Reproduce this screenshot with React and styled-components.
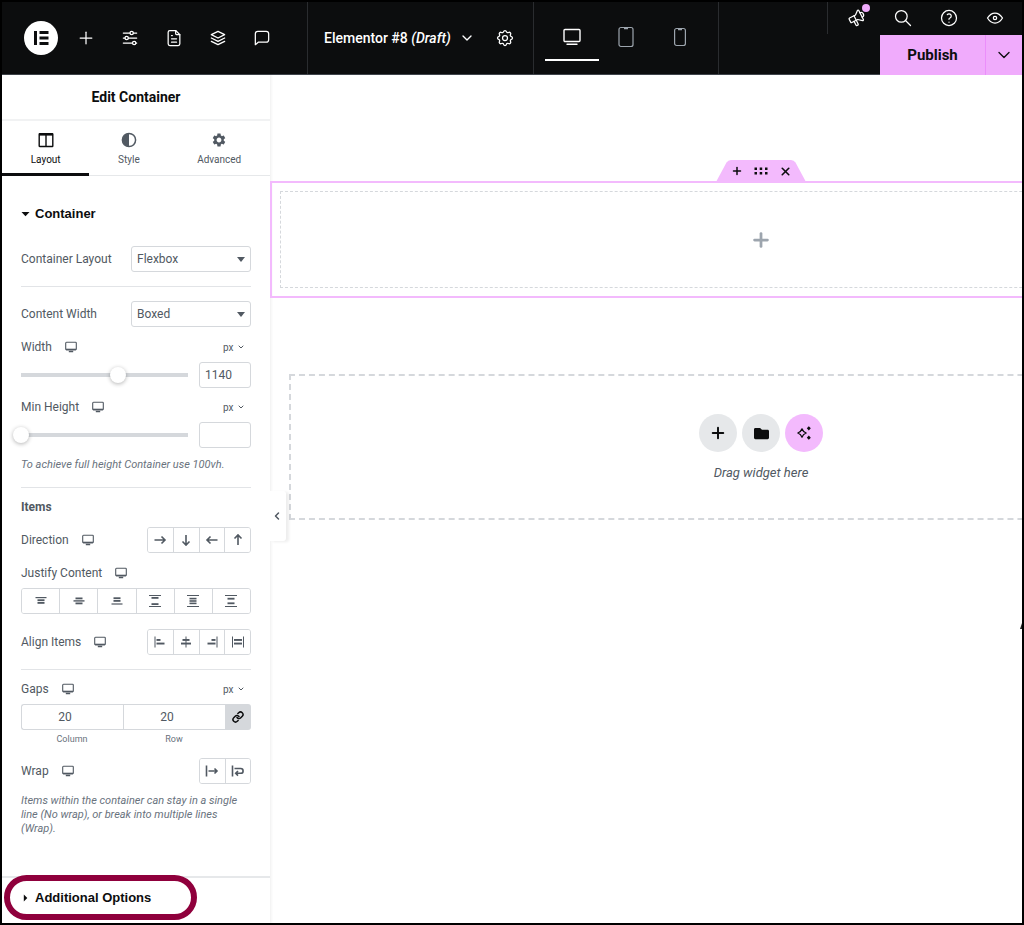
import React, { useState } from "react";
import styled, { createGlobalStyle } from "styled-components";
import { ChevronDown, ChevronLeft, Link, Plus, X } from "lucide-react";
import {
    TbAdjustmentsHorizontal,
    TbEye,
    TbFileText,
    TbHelp,
    TbPlus,
    TbSearch,
    TbSettings,
    TbStack2,
} from "react-icons/tb";
import { MdSettings } from "react-icons/md";
import { FaFolder } from "react-icons/fa";

const GlobalStyle = createGlobalStyle`
    * { box-sizing: border-box; }
    body { margin: 0; background: #000; font-family: Roboto, "Liberation Sans", sans-serif; color: #515962; }
    button, input, select { font-family: inherit; color: inherit; margin: 0; }
    button { cursor: pointer; }
`;

/* ---------- icons ---------- */

const Stroked = ({ size = 20, width = 1.5, children }) => (
    <svg width={size} height={size} viewBox="0 0 24 24" fill="none" stroke="currentColor"
        strokeWidth={width} strokeLinecap="round" strokeLinejoin="round">
        {children}
    </svg>
);

const LogoIcon = () => (
    <svg width="34" height="34" viewBox="0 0 34 34">
        <circle cx="17" cy="17" r="17" fill="#fff" />
        <path d="M10 10h3v14h-3zM15.500 10H24.500v3H15.500zM15.500 15.500H24.500v3H15.500zM15.500 21H24.500v3H15.500z" fill="#0c0d0e" />
    </svg>
);

const ChatIcon = () => (
    <Stroked><path d="M4 20V7a3 3 0 0 1 3-3h10a3 3 0 0 1 3 3v7a3 3 0 0 1-3 3H7.500L4 20" /></Stroked>
);

const MegaphoneIcon = () => (
    <Stroked>
        <g transform="rotate(-27 12 12)">
            <path d="M18 8a3 3 0 0 1 0 6" />
            <path d="M10 8v11a1 1 0 0 1-1 1H8a1 1 0 0 1-1-1v-5" />
            <path d="M12 8l4.524-3.770a.9.9 0 0 1 1.476.692v12.156a.9.9 0 0 1-1.476.692L12 14H4a1 1 0 0 1-1-1V9a1 1 0 0 1 1-1h8" />
        </g>
    </Stroked>
);

const DesktopIcon = () => (
    <svg width="20" height="20" viewBox="0 0 20 20" fill="none" stroke="currentColor" strokeWidth="1.4" strokeLinecap="round">
        <rect x="2" y="2.500" width="16" height="12" rx="1" />
        <path d="M5 17.300h10" />
    </svg>
);

const TabletIcon = () => (
    <svg width="20" height="22" viewBox="0 0 20 22" fill="none" stroke="currentColor" strokeWidth="1.200">
        <rect x="3" y="1.500" width="14" height="19" rx="2" />
        <path d="M8 2.500h4" strokeWidth="1.500" />
    </svg>
);

const MobileIcon = () => (
    <svg width="20" height="20" viewBox="0 0 20 20" fill="none" stroke="currentColor" strokeWidth="1.200">
        <rect x="4.600" y="1.500" width="10.800" height="17" rx="2" />
        <path d="M8 2.500h4" strokeWidth="1.500" />
    </svg>
);

const ColumnsIcon = () => (
    <svg width="16" height="16" viewBox="0 0 16 16" fill="none" stroke="currentColor" strokeWidth="1.400">
        <rect x="1.200" y="1.700" width="13.600" height="12.800" rx="0.500" />
        <path d="M1 2.500h14" strokeWidth="2.200" />
        <path d="M8 3v11" />
    </svg>
);

const ContrastIcon = () => (
    <svg width="16" height="16" viewBox="0 0 16 16">
        <circle cx="8" cy="8" r="6.600" fill="none" stroke="currentColor" strokeWidth="1.500" />
        <path d="M8 1.500a6.500 6.500 0 0 0 0 13z" fill="currentColor" />
    </svg>
);

const ScreenIcon = () => (
    <svg width="12" height="12" viewBox="0 0 12 12" fill="none" stroke="currentColor">
        <rect x="0.700" y="1.300" width="10.600" height="7.500" rx="0.800" strokeWidth="1.100" />
        <path d="M1 8.500h10" strokeWidth="1.600" />
        <path d="M3.800 10.500h4.400" strokeWidth="1.500" />
    </svg>
);

const SparkleIcon = () => (
    <svg width="16" height="16" viewBox="0 0 16 16" fill="#0c0d0e">
        <path d="M6 3.800Q7 7 10.200 8Q7 9 6 12.200Q5 9 1.800 8Q5 7 6 3.800Z" fill="none" stroke="#0c0d0e" strokeWidth="1.300" strokeLinejoin="round" />
        <path d="M12.800 1.200l2 2.100-2 2.100-2-2.100zM12.800 10.600l2 2.100-2 2.100-2-2.100z" />
    </svg>
);

// icons of the choice buttons, all drawn in a 16x16 box
const choicePaths = {
    right: "M2.500 8h10.500M9.500 4.500L13 8l-3.500 3.500",
    down: "M8 3v10M4.500 9.500L8 13l3.500-3.500",
    left: "M13.500 8H3M6.500 4.500L3 8l3.500 3.500",
    up: "M8 13V3M4.500 6.500L8 3l3.500 3.500",
    nowrap: "M2.500 2.500v11M4.500 8H13M10.500 5.500L13 8l-2.500 2.500",
    wrap: "M2.500 2.500v11M4.500 5.500h6.200a2.300 2.300 0 0 1 0 4.800H6M8 8L5.700 10.300 8 12.600",
};

const choiceBars = {
    jStart: [[2.5, 4, 11, 1.2], [4.5, 6.3, 7, 1.8], [4.5, 9, 7, 1.8]],
    jCenter: [[4.5, 4.5, 7, 1.8], [2.5, 7.2, 11, 1.4], [4.5, 9.5, 7, 1.8]],
    jEnd: [[4.5, 4.3, 7, 1.8], [4.5, 7, 7, 1.8], [2.5, 10.4, 11, 1.2]],
    jBetween: [[2, 2, 12, 1], [4.5, 4, 7, 1.8], [4.5, 10.2, 7, 1.8], [2, 13, 12, 1]],
    jAround: [[2, 2, 12, 1], [4.5, 4.8, 7, 1.6], [4.5, 7.2, 7, 1.6], [4.5, 9.6, 7, 1.6], [2, 13, 12, 1]],
    jEvenly: [[2, 2, 12, 1], [4.5, 4.8, 7, 1.8], [4.5, 9.4, 7, 1.8], [2, 13, 12, 1]],
    aStart: [[2.5, 2.5, 1, 11], [4.5, 5, 4, 1.9], [4.5, 8.6, 8, 1.9]],
    aCenter: [[7.5, 2.5, 1, 11], [4.5, 5, 7, 1.9], [3, 8.6, 10, 1.9]],
    aEnd: [[12.5, 2.5, 1, 11], [7.5, 5, 4, 1.9], [3.5, 8.6, 8, 1.9]],
    aStretch: [[2, 2.5, 1, 11], [4, 5, 8, 1.9], [4, 8.6, 8, 1.9], [13, 2.5, 1, 11]],
};

function ChoiceIcon({ name }) {
    if (choicePaths[name]) {
        return (
            <svg width="16" height="16" viewBox="0 0 16 16" fill="none" stroke="currentColor" strokeWidth="1.6">
                <path d={choicePaths[name]} />
            </svg>
        );
    }
    return (
        <svg width="16" height="16" viewBox="0 0 16 16" fill="currentColor">
            {choiceBars[name].map(([x, y, w, h]) => <rect key={`${x}-${y}`} x={x} y={y} width={w} height={h} />)}
        </svg>
    );
}

/* ---------- top bar ---------- */

const Frame = styled.div`
    display: flex;
    flex-direction: column;
    min-height: 100vh;
    border: 2px solid #000;
    background: #fff;
    overflow: hidden;
`;

const TopBar = styled.header`
    display: flex;
    height: 73px;
    background: #0c0d0e;
    color: #fff;
    border-bottom: 1px solid #3f444b;
`;

const BarGroup = styled.div`
    display: flex;
    align-items: center;
    padding: 0 ${(p) => p.$end ?? p.$pad}px 0 ${(p) => p.$pad}px;
    border-right: 1px solid #2a2c2f;
`;

const BarButton = styled.button`
    display: flex;
    align-items: center;
    justify-content: center;
    position: relative;
    width: ${(p) => p.$width || 44}px;
    height: 32px;
    padding: 0;
    border: 0;
    background: none;
    color: ${(p) => (p.$dim ? "#9da5ae" : "#fff")};
`;

const LogoButton = styled(BarButton)`
    height: 34px;
    margin-right: 6px;
`;

const DeviceButton = styled(BarButton)`
    height: 46px;
    border-bottom: 2px solid ${(p) => (p.$active ? "#fff" : "transparent")};
`;

const TitleButton = styled.button`
    display: flex;
    align-items: center;
    gap: 8px;
    padding: 0;
    margin-right: 8px;
    border: 0;
    background: none;
    color: #fff;
    font-size: 14px;
    font-weight: 500;
    white-space: nowrap;
`;

const BarEnd = styled.div`
    flex: 1;
    display: flex;
    flex-direction: column;
    align-items: flex-end;
    justify-content: space-between;
    margin-bottom: -1px;
`;

const Tools = styled.div`
    display: flex;
    padding: 0 4px 0 6px;
    border-left: 1px solid #2a2c2f;
`;

const Badge = styled.span`
    position: absolute;
    top: 2px;
    right: 10px;
    width: 8px;
    height: 8px;
    border-radius: 50%;
    background: #f0abfc;
`;

const PublishGroup = styled.div`
    display: flex;
    height: 40px;
    background: #f0abfc;
`;

const PublishButton = styled.button`
    display: flex;
    align-items: center;
    justify-content: center;
    width: ${(p) => p.$width}px;
    padding: 0;
    border: 0;
    background: none;
    color: #0c0d0e;
    font-size: 15px;
    font-weight: 700;
    & + & {
        border-left: 1px solid #eb8efb;
    }
`;

/* ---------- side panel ---------- */

const Body = styled.div`
    flex: 1;
    display: flex;
`;

const Panel = styled.aside`
    position: relative;
    flex: 0 0 268px;
    background: #fff;
    box-shadow: 0 0 3px 1px rgba(0, 0, 0, 0.07);
`;

const PanelTitle = styled.h1`
    margin: 0;
    font-size: 14px;
    font-weight: 700;
    line-height: 44px;
    text-align: center;
    color: #0c0d0e;
    border-bottom: 2px solid #f1f2f3;
`;

const Tabs = styled.div`
    display: flex;
    height: 55px;
    border-bottom: 1px solid #e6e8ea;
`;

const Tab = styled.button`
    flex: 1 1 auto;
    display: flex;
    flex-direction: column;
    align-items: center;
    justify-content: center;
    gap: 6px;
    padding: 3px 0 0;
    border: 0;
    border-bottom: 3px solid ${(p) => (p.$active ? "#0c0d0e" : "transparent")};
    margin-bottom: -1px;
    background: none;
    color: ${(p) => (p.$active ? "#0c0d0e" : "#515962")};
    font-size: 10px;
    line-height: 12px;
`;

const SectionToggle = styled.button`
    display: flex;
    align-items: center;
    gap: 5px;
    width: 100%;
    padding: ${(p) => (p.$open ? "25px 19px 19px" : "7px 19px")};
    border: 0;
    border-top: ${(p) => (p.$open ? 0 : 2)}px solid #e6e8ea;
    background: none;
    color: #0c0d0e;
    font-family: "Liberation Sans", Arial, sans-serif;
    font-size: 13px;
    font-weight: 700;
    line-height: 26px;
`;

const Controls = styled.div`
    padding: 0 19px 40px;
`;

const Row = styled.div`
    display: flex;
    align-items: center;
    justify-content: space-between;
    min-height: ${(p) => (p.$short ? 18 : 26)}px;
    margin-top: ${(p) => p.$gap || 0}px;
`;

const Label = styled.label`
    display: flex;
    align-items: center;
    gap: 13px;
    font-size: 12px;
    line-height: 18px;
    white-space: nowrap;
`;

const Subheading = styled.h2`
    margin: 10px 0 0;
    font-size: 12px;
    font-weight: 700;
    line-height: 18px;
`;

const Note = styled.p`
    margin: 10px 0 0;
    font-size: 11px;
    font-style: italic;
    line-height: 14px;
    color: #69727d;
`;

const Divider = styled.hr`
    height: 1px;
    margin: ${(p) => p.$gap || 14}px 0 0;
    border: 0;
    background: #e2e4e7;
`;

const SelectBox = styled.div`
    position: relative;
    width: 120px;
    select {
        appearance: none;
        width: 100%;
        height: 26px;
        padding: 0 5px;
        border: 1px solid #d5d8dc;
        border-radius: 3px;
        background: #fff;
        font-size: 12px;
    }
    &::after {
        content: "";
        position: absolute;
        top: 11px;
        right: 6px;
        border: 4px solid transparent;
        border-top: 5px solid #515962;
        border-bottom: 0;
        pointer-events: none;
    }
`;

const UnitBox = styled.span`
    display: flex;
    align-items: center;
    gap: 3px;
    margin-right: 6px;
    select {
        appearance: none;
        padding: 0;
        border: 0;
        background: none;
        font-size: 10px;
    }
`;

const NumberInput = styled.input`
    width: 52px;
    height: 26px;
    padding: 0 5px;
    border: 1px solid #d5d8dc;
    border-radius: 3px;
    background: #fff;
    font-size: 12px;
`;

const Slider = styled.input`
    appearance: none;
    flex: 1;
    min-width: 0;
    height: 20px;
    margin: 0 3px 0 -8px;
    background: linear-gradient(#d5d8dc, #d5d8dc) center / calc(100% - 16px) 4px no-repeat;
    &::-webkit-slider-thumb {
        appearance: none;
        width: 16px;
        height: 16px;
        border-radius: 50%;
        background: #fff;
        box-shadow: 0 1px 4px rgba(0, 0, 0, 0.3);
    }
`;

const ChoiceGroup = styled.div`
    display: flex;
    width: ${(p) => (p.$full ? "100%" : `${p.$count * 26}px`)};
    height: 26px;
    border: 1px solid #d5d8dc;
    border-radius: 3px;
    overflow: hidden;
`;

const Choice = styled.button`
    flex: 1;
    display: flex;
    align-items: center;
    justify-content: center;
    padding: 0;
    border: 0;
    background: #fff;
    & + & {
        border-left: 1px solid #d5d8dc;
    }
`;

const GapGrid = styled.div`
    display: grid;
    grid-template-columns: 1fr 1fr 26px;
    margin-top: 6px;
    text-align: center;
    label {
        margin-top: 3px;
        font-size: 9px;
        line-height: 12px;
        color: #69727d;
    }
`;

const GapInput = styled(NumberInput)`
    width: 100%;
    padding: 0 15px 0 0;
    text-align: center;
    border-right: 0;
    border-radius: ${(p) => (p.$first ? "3px 0 0 3px" : 0)};
`;

const LinkButton = styled.button`
    display: flex;
    align-items: center;
    justify-content: center;
    padding: 0;
    border: 0;
    border-radius: 0 3px 3px 0;
    background: #d5d8dc;
    color: #0c0d0e;
`;

const Footer = styled.div`
    position: relative;
`;

const Highlight = styled.span`
    position: absolute;
    top: -1px;
    left: 2px;
    width: 193px;
    height: 45px;
    border: 6px solid #8f003c;
    border-radius: 23px;
    pointer-events: none;
`;

const CollapseButton = styled.button`
    position: absolute;
    top: 416px;
    left: 100%;
    z-index: 1;
    display: flex;
    align-items: center;
    justify-content: center;
    width: 16px;
    height: 50px;
    padding: 0 2px 0 0;
    border: 0;
    border-radius: 0 3px 3px 0;
    background: #fff;
    box-shadow: 3px 1px 3px rgba(0, 0, 0, 0.07);
`;

/* ---------- canvas ---------- */

const Canvas = styled.main`
    position: relative;
    flex: 1;
    min-width: 0;
    overflow: hidden;
`;

// the edited page is wider than the space left beside the panel
const Page = styled.div`
    width: calc(100% + 230px);
    padding-top: 85px;
`;

const Handle = styled.div`
    position: relative;
    display: flex;
    align-items: center;
    justify-content: center;
    width: 90px;
    height: 22px;
    margin: 0 auto;
    color: #0c0d0e;
    > svg {
        position: absolute;
        inset: 0;
    }
`;

const HandleButton = styled.button`
    position: relative;
    display: flex;
    align-items: center;
    justify-content: center;
    width: 24px;
    height: 22px;
    padding: 0;
    border: 0;
    background: none;
`;

const Selected = styled.section`
    height: 117px;
    padding: 8px;
    border: 2px solid #f3bafd;
    margin-top: -1px;
`;

const EmptySlot = styled.div`
    display: flex;
    align-items: center;
    justify-content: center;
    height: 97px;
    border: 1px dashed #d5d8dc;
    color: #9da5ae;
`;

const DropZone = styled.section`
    display: flex;
    flex-direction: column;
    align-items: center;
    gap: 12px;
    height: 146px;
    margin: 76px 19px 0;
    padding-top: 38px;
    border: 2px dashed #d5d8dc;
    font-size: 13px;
    font-style: italic;
    line-height: 18px;
    p {
        margin: 0;
    }
`;

const RoundButtons = styled.div`
    display: flex;
    gap: 5px;
`;

const RoundButton = styled.button`
    display: flex;
    align-items: center;
    justify-content: center;
    width: 38px;
    height: 38px;
    padding: 0;
    border: 0;
    border-radius: 50%;
    background: ${(p) => (p.$pink ? "#f3bafd" : "#e6e8ea")};
    color: #0c0d0e;
`;

const EdgeMark = styled.svg`
    position: absolute;
    top: 548px;
    right: 0;
`;

/* ---------- parts ---------- */

function Arrow({ open }) {
    return (
        <svg width="9" height="8" viewBox="0 0 9 8" fill="currentColor">
            <path d={open ? "M0.500 2h8L4.500 6.200z" : "M2.800 0.500L6.300 4 2.800 7.500z"} />
        </svg>
    );
}

function UnitRow({ id, label, gap }) {
    return (
        <Row $short $gap={gap}>
            <Label htmlFor={id}>{label}<ScreenIcon /></Label>
            <UnitBox>
                <select aria-label={`${label} unit`}><option>px</option></select>
                <ChevronDown size={8} strokeWidth={3} />
            </UnitBox>
        </Row>
    );
}

function SelectRow({ id, label, options, gap }) {
    return (
        <Row $gap={gap}>
            <Label htmlFor={id}>{label}</Label>
            <SelectBox>
                <select id={id}>{options.map((o) => <option key={o}>{o}</option>)}</select>
            </SelectBox>
        </Row>
    );
}

function Choices({ label, items, full }) {
    return (
        <ChoiceGroup role="group" aria-label={label} $full={full} $count={items.length}>
            {items.map((name) => (
                <Choice key={name} type="button" aria-label={name}><ChoiceIcon name={name} /></Choice>
            ))}
        </ChoiceGroup>
    );
}

function App() {
    const [width, setWidth] = useState("1140");
    const [minHeight, setMinHeight] = useState("");
    const [column, setColumn] = useState("20");
    const [row, setRow] = useState("20");

    return (
        <>
            <GlobalStyle />
            <Frame>
                <TopBar>
                    <BarGroup $pad={22} $end={23}>
                        <LogoButton aria-label="Menu" $width={34}><LogoIcon /></LogoButton>
                        <BarButton aria-label="Add element"><TbPlus size={20} strokeWidth={1.5} /></BarButton>
                        <BarButton aria-label="Site settings"><TbAdjustmentsHorizontal size={20} strokeWidth={1.5} /></BarButton>
                        <BarButton aria-label="Pages"><TbFileText size={20} strokeWidth={1.5} /></BarButton>
                        <BarButton aria-label="Structure"><TbStack2 size={20} strokeWidth={1.5} /></BarButton>
                        <BarButton aria-label="Notes"><ChatIcon /></BarButton>
                    </BarGroup>
                    <BarGroup $pad={16} $end={6}>
                        <TitleButton>
                            <span>Elementor #8 <i>(Draft)</i></span>
                            <ChevronDown size={16} strokeWidth={2} />
                        </TitleButton>
                        <BarButton aria-label="Page settings"><TbSettings size={20} strokeWidth={1.5} /></BarButton>
                    </BarGroup>
                    <BarGroup $pad={11}>
                        <DeviceButton aria-label="Desktop" $width={54} $active><DesktopIcon /></DeviceButton>
                        <DeviceButton aria-label="Tablet" $width={54} $dim><TabletIcon /></DeviceButton>
                        <DeviceButton aria-label="Mobile" $width={54} $dim><MobileIcon /></DeviceButton>
                    </BarGroup>
                    <BarEnd>
                        <Tools>
                            <BarButton aria-label="What's new" $width={46}><MegaphoneIcon /><Badge /></BarButton>
                            <BarButton aria-label="Search" $width={46}><TbSearch size={20} strokeWidth={1.5} /></BarButton>
                            <BarButton aria-label="Help" $width={46}><TbHelp size={20} strokeWidth={1.5} /></BarButton>
                            <BarButton aria-label="Preview" $width={46}><TbEye size={20} strokeWidth={1.5} /></BarButton>
                        </Tools>
                        <PublishGroup>
                            <PublishButton $width={105}>Publish</PublishButton>
                            <PublishButton $width={37} aria-label="Save options"><ChevronDown size={20} strokeWidth={1.6} /></PublishButton>
                        </PublishGroup>
                    </BarEnd>
                </TopBar>

                <Body>
                    <Panel>
                        <PanelTitle>Edit Container</PanelTitle>
                        <Tabs>
                            <Tab $active><ColumnsIcon />Layout</Tab>
                            <Tab><ContrastIcon />Style</Tab>
                            <Tab><MdSettings size={16} />Advanced</Tab>
                        </Tabs>
                        <SectionToggle $open><Arrow open />Container</SectionToggle>
                        <Controls>
                            <SelectRow id="layout" label="Container Layout" options={["Flexbox", "Grid"]} />
                            <Divider />
                            <SelectRow id="content" label="Content Width" options={["Boxed", "Full Width"]} gap={14} />
                            <UnitRow id="width" label="Width" gap={11} />
                            <Row $gap={6}>
                                <Slider type="range" aria-label="Width" min="500" max="1600" value={width} onChange={(e) => setWidth(e.target.value)} />
                                <NumberInput id="width" value={width} onChange={(e) => setWidth(e.target.value)} />
                            </Row>
                            <UnitRow id="minHeight" label="Min Height" gap={10} />
                            <Row $gap={6}>
                                <Slider type="range" aria-label="Min Height" min="0" max="1440" value={minHeight || 0} onChange={(e) => setMinHeight(e.target.value)} />
                                <NumberInput id="minHeight" value={minHeight} onChange={(e) => setMinHeight(e.target.value)} />
                            </Row>
                            <Note>To achieve full height Container use 100vh.</Note>
                            <Divider $gap={15} />
                            <Subheading>Items</Subheading>
                            <Row $gap={11}>
                                <Label as="span">Direction<ScreenIcon /></Label>
                                <Choices label="Direction" items={["right", "down", "left", "up"]} />
                            </Row>
                            <Row $short $gap={11}>
                                <Label as="span">Justify Content<ScreenIcon /></Label>
                            </Row>
                            <Row $gap={6}>
                                <Choices full label="Justify Content" items={["jStart", "jCenter", "jEnd", "jBetween", "jAround", "jEvenly"]} />
                            </Row>
                            <Row $gap={15}>
                                <Label as="span">Align Items<ScreenIcon /></Label>
                                <Choices label="Align Items" items={["aStart", "aCenter", "aEnd", "aStretch"]} />
                            </Row>
                            <Divider />
                            <UnitRow id="column" label="Gaps" gap={10} />
                            <GapGrid>
                                <GapInput id="column" $first value={column} onChange={(e) => setColumn(e.target.value)} />
                                <GapInput id="row" value={row} onChange={(e) => setRow(e.target.value)} />
                                <LinkButton aria-label="Link values"><Link size={12} strokeWidth={3} /></LinkButton>
                                <label htmlFor="column">Column</label>
                                <label htmlFor="row">Row</label>
                            </GapGrid>
                            <Row $gap={13}>
                                <Label as="span">Wrap<ScreenIcon /></Label>
                                <Choices label="Wrap" items={["nowrap", "wrap"]} />
                            </Row>
                            <Note>
                                Items within the container can stay in a single line (No wrap), or break into multiple lines (Wrap).
                            </Note>
                        </Controls>
                        <Footer>
                            <SectionToggle><Arrow />Additional Options</SectionToggle>
                            <Highlight />
                        </Footer>
                        <CollapseButton aria-label="Hide panel"><ChevronLeft size={12} strokeWidth={3} /></CollapseButton>
                    </Panel>

                    <Canvas>
                        <Page>
                            <Handle>
                                <svg width="90" height="22" viewBox="0 0 90 22">
                                    <path d="M0 22L10.500 2.500Q12 0 15 0H75Q78 0 79.500 2.500L90 22z" fill="#f3bafd" />
                                </svg>
                                <HandleButton aria-label="Add container"><Plus size={12} strokeWidth={3} /></HandleButton>
                                <HandleButton aria-label="Edit container">
                                    <svg width="14" height="8" viewBox="0 0 14 8" fill="currentColor">
                                        <path d="M0.500 0.500h2.500v2.500H0.500zM5.700 0.500h2.500v2.500H5.700zM11 0.500h2.500v2.500H11zM0.500 5h2.500v2.500H0.500zM5.700 5h2.500v2.500H5.700zM11 5h2.500v2.500H11z" />
                                    </svg>
                                </HandleButton>
                                <HandleButton aria-label="Delete container"><X size={13} strokeWidth={3} /></HandleButton>
                            </Handle>
                            <Selected>
                                <EmptySlot><Plus size={22} strokeWidth={3} /></EmptySlot>
                            </Selected>
                            <DropZone>
                                <RoundButtons>
                                    <RoundButton aria-label="Add new container"><Plus size={18} strokeWidth={2.6} /></RoundButton>
                                    <RoundButton aria-label="Add template"><FaFolder size={15} /></RoundButton>
                                    <RoundButton aria-label="Build with AI" $pink><SparkleIcon /></RoundButton>
                                </RoundButtons>
                                <p>Drag widget here</p>
                            </DropZone>
                        </Page>
                        <EdgeMark width="2" height="6" viewBox="0 0 2 6"><path d="M0 6L2 0v6z" fill="#222" /></EdgeMark>
                    </Canvas>
                </Body>
            </Frame>
        </>
    );
}

export default App;
